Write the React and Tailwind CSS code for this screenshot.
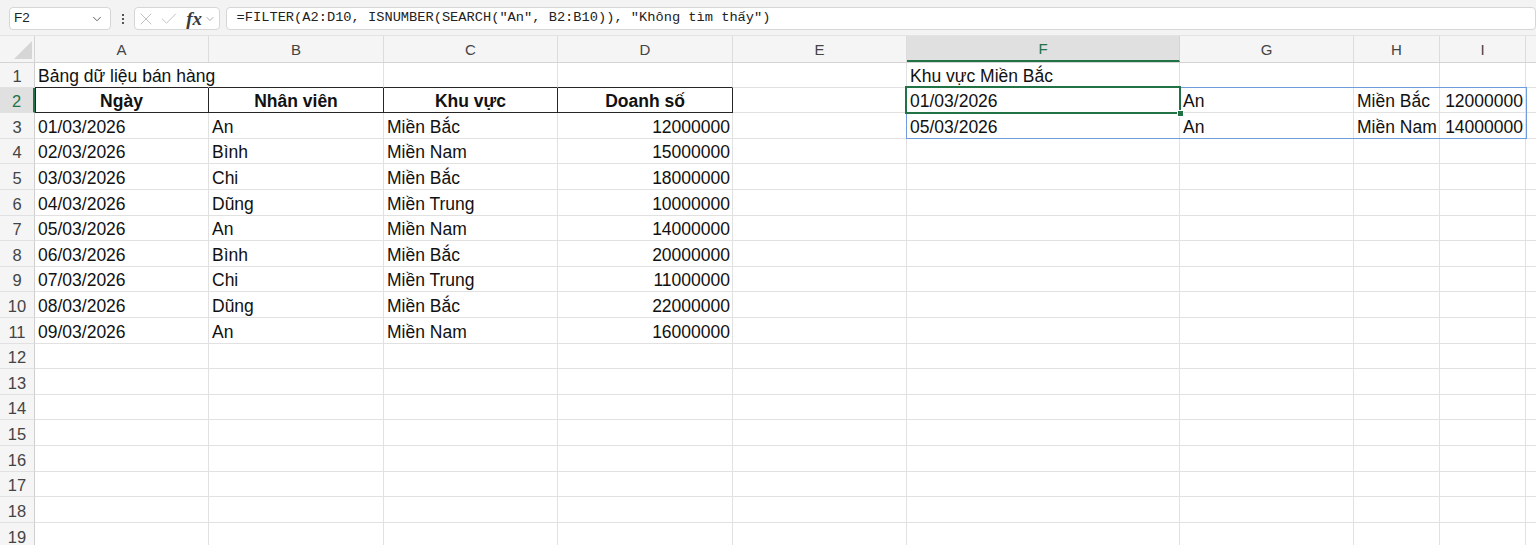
import { Check, ChevronDown, X } from "lucide-react";

const COLS = [
  { key: "A", w: "w-[174px] min-w-[174px]" },
  { key: "B", w: "w-[175px] min-w-[175px]" },
  { key: "C", w: "w-[174px] min-w-[174px]" },
  { key: "D", w: "w-[175px] min-w-[175px]" },
  { key: "E", w: "w-[174px] min-w-[174px]" },
  { key: "F", w: "w-[273px] min-w-[273px]" },
  { key: "G", w: "w-[174px] min-w-[174px]" },
  { key: "H", w: "w-[86px] min-w-[86px]" },
  { key: "I", w: "w-[86px] min-w-[86px]" },
  { key: "J", w: "w-[174px] min-w-[174px]" },
];

const HEIGHTS = [25, 25, 26, 25, 26, 26, 25, 26, 25, 26, 26, 25, 26, 25, 26, 26, 25, 26, 26];

const sales = [
  ["01/03/2026", "An", "Miền Bắc", "12000000"],
  ["02/03/2026", "Bình", "Miền Nam", "15000000"],
  ["03/03/2026", "Chi", "Miền Bắc", "18000000"],
  ["04/03/2026", "Dũng", "Miền Trung", "10000000"],
  ["05/03/2026", "An", "Miền Nam", "14000000"],
  ["06/03/2026", "Bình", "Miền Bắc", "20000000"],
  ["07/03/2026", "Chi", "Miền Trung", "11000000"],
  ["08/03/2026", "Dũng", "Miền Bắc", "22000000"],
  ["09/03/2026", "An", "Miền Nam", "16000000"],
];

// cells[row][col] = { t, bold, right, center }
const cells = {
  1: { A: { t: "Bảng dữ liệu bán hàng", spill: true }, F: { t: "Khu vực Miền Bắc" } },
  2: {
    A: { t: "Ngày", bold: true, center: true },
    B: { t: "Nhân viên", bold: true, center: true },
    C: { t: "Khu vực", bold: true, center: true },
    D: { t: "Doanh số", bold: true, center: true },
    F: { t: "01/03/2026" },
    G: { t: "An" },
    H: { t: "Miền Bắc" },
    I: { t: "12000000", right: true },
  },
};
sales.forEach((r, i) => {
  const row = i + 3;
  cells[row] = {
    ...(cells[row] || {}),
    A: { t: r[0] },
    B: { t: r[1] },
    C: { t: r[2] },
    D: { t: r[3], right: true },
  };
});
cells[3] = { ...cells[3], F: { t: "05/03/2026" }, G: { t: "An" }, H: { t: "Miền Nam" }, I: { t: "14000000", right: true } };

const tableCols = ["A", "B", "C", "D"];

function Cell({ row, col, ci }) {
  const c = cells[row]?.[col];
  const inTable = tableCols.includes(col);
  const darkBottom = inTable && (row === 1 || row === 2);
  const darkRight = inTable && row === 2;
  const hideRight = row === 1 && col === "A";

  const borderR = hideRight
    ? "border-r border-r-transparent"
    : darkRight
    ? "border-r border-r-[#262626]"
    : "border-r border-r-[#e1e1e1]";
  const borderB = darkBottom ? "border-b border-b-[#262626]" : "border-b border-b-[#e1e1e1]";
  const leftEdge = row === 2 && col === "A" ? "shadow-[inset_1px_0_0_#262626]" : "";

  let justify = "justify-start pl-[3px]";
  if (c?.right) justify = "justify-end pr-[2px]";
  if (c?.center) justify = "justify-center";

  return (
    <div
      className={`${COLS[ci].w} h-full flex items-end pb-[1px] ${justify} ${borderR} ${borderB} ${leftEdge} ${
        c?.spill ? "overflow-visible relative z-10" : "overflow-hidden"
      }`}
    >
      {c && (
        <span className={`whitespace-nowrap leading-[20px] text-[17.5px] text-[#111] ${c.bold ? "font-bold" : ""}`}>
          {c.t}
        </span>
      )}
    </div>
  );
}

function FormulaBar() {
  return (
    <div className="h-[36px] bg-[#f3f3f3] flex items-start pt-[7px] border-b border-[#e3e3e3]">
      <div className="ml-[9px] w-[103px] h-[23px] bg-white border border-[#d6d6d6] rounded-[4px] flex items-center justify-between pl-[4px] pr-[6px]">
        <span className="text-[13.5px] text-[#222]">F2</span>
        <ChevronDown size={14} strokeWidth={1.6} className="text-[#555]" />
      </div>
      <div className="w-[23px] h-[23px] flex flex-col items-center justify-center gap-[2px]">
        <span className="w-[2px] h-[2px] bg-[#555]" />
        <span className="w-[2px] h-[2px] bg-[#555]" />
        <span className="w-[2px] h-[2px] bg-[#555]" />
      </div>
      <div className="w-[86px] h-[23px] bg-white border border-[#d6d6d6] rounded-[4px] flex items-center pl-[1px] pr-[2px]">
        <X size={20} strokeWidth={1.1} className="text-[#bdbdbd]" />
        <Check size={20} strokeWidth={1.1} className="ml-[3px] text-[#bdbdbd]" />
        <span className="ml-[7px] font-['Liberation_Serif',serif] italic font-bold text-[19px] leading-none text-[#3a3a3a]">
          fx
        </span>
        <ChevronDown size={12} strokeWidth={1.4} className="ml-[2px] text-[#888]" />
      </div>
      <div className="ml-[6px] w-[1320px] h-[23px] bg-white border border-[#d6d6d6] rounded-[4px] flex items-center pl-[10px]">
        <span className="font-['Liberation_Mono',monospace] text-[13.7px] text-[#222] whitespace-nowrap">
          =FILTER(A2:D10, ISNUMBER(SEARCH("An", B2:B10)), "Không tìm thấy")
        </span>
      </div>
    </div>
  );
}

function HeaderRow() {
  return (
    <div className="flex h-[27px] bg-[#f5f5f5] border-b border-[#d4d4d4]">
      <div className="w-[35px] min-w-[35px] h-full border-r border-[#d4d4d4] flex items-end justify-end pr-[2px] pb-[3px]">
        <svg width="18" height="18" viewBox="0 0 18 18">
          <polygon points="18,0 18,18 0,18" fill="#d6d6d6" />
        </svg>
      </div>
      {COLS.map((c) => {
        const active = c.key === "F";
        return (
          <div
            key={c.key}
            className={`${c.w} h-full flex items-center justify-center pt-[3px] text-[15px] ${
              active
                ? "bg-[#e0e0e0] text-[#217346] border-b-2 border-[#217346] border-r border-r-[#d4d4d4]"
                : "text-[#444] border-r border-[#dcdcdc]"
            }`}
          >
            {c.key !== "J" ? c.key : ""}
          </div>
        );
      })}
    </div>
  );
}

export default function App() {
  return (
    <div className="w-[1536px] h-[545px] overflow-hidden bg-white font-['Liberation_Sans',Arial,sans-serif]">
      <FormulaBar />
      <HeaderRow />
      <div className="relative">
        {HEIGHTS.map((h, i) => {
          const row = i + 1;
          const active = row === 2;
          return (
            <div key={row} className={`flex ${h === 25 ? "h-[25px]" : "h-[26px]"}`}>
              <div
                className={`w-[35px] min-w-[35px] h-full flex items-end justify-center pb-[1px] border-b border-b-[#e1e1e1] ${
                  active
                    ? "bg-[#e0e0e0] text-[#217346] border-r-2 border-r-[#217346]"
                    : "bg-[#f5f5f5] text-[#444] border-r border-r-[#cfcfcf]"
                }`}
              >
                <span className="leading-[20px] text-[16.5px]">{row}</span>
              </div>
              {COLS.map((c, ci) => (
                <Cell key={c.key} row={row} col={c.key} ci={ci} />
              ))}
            </div>
          );
        })}

        {/* spill range F2:I3 */}
        <div className="absolute left-[906px] top-[24px] w-[621px] h-[52px] border border-[#6f9cdc] pointer-events-none" />
        {/* active cell F2 */}
        <div className="absolute left-[905px] top-[23px] w-[276px] h-[28px] border-2 border-[#217346] pointer-events-none" />
        <div className="absolute left-[1177px] top-[47px] w-[7px] h-[7px] bg-[#217346] border border-white pointer-events-none" />
      </div>
    </div>
  );
}
